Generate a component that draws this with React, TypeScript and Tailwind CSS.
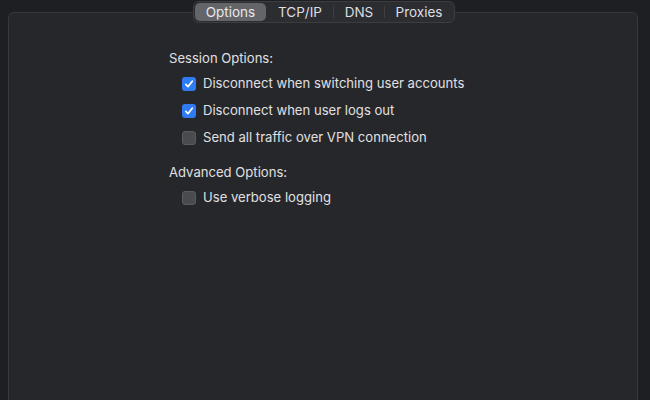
import React, { useState } from "react";

const tabs = [
  { name: "Options", w: "w-[71px]" },
  { name: "TCP/IP", w: "w-[66px]" },
  { name: "DNS", w: "w-[50px]" },
  { name: "Proxies", w: "w-[68px]" },
];

interface CheckRowProps {
  label: string;
  checked: boolean;
  onToggle: () => void;
}

const CheckRow: React.FC<CheckRowProps> = ({ label, checked, onToggle }) => (
  <label className="flex h-[27px] cursor-default items-center gap-[7px] pl-[13px]" onClick={onToggle}>
    {checked ? (
      <span className="flex h-[14px] w-[14px] items-center justify-center rounded-[3px] bg-[#2f7bf5]">
        <svg width="10" height="10" viewBox="0 0 10 10" fill="none">
          <path d="M1.8 5.3 L4 7.6 L8.3 2.2" stroke="white" strokeWidth="1.7" strokeLinecap="round" strokeLinejoin="round" />
        </svg>
      </span>
    ) : (
      <span className="h-[14px] w-[14px] rounded-[3px] border border-[#5a5b5f] bg-[#4a4b4e]" />
    )}
    <span>{label}</span>
  </label>
);

export default function App() {
  const [tab, setTab] = useState("Options");
  const [opts, setOpts] = useState({
    switching: true,
    logout: true,
    vpn: false,
    verbose: false,
  });

  const toggle = (k: keyof typeof opts) => setOpts({ ...opts, [k]: !opts[k] });

  return (
    <div
      className="relative h-[400px] w-[650px] overflow-hidden bg-[#1e1f22] text-[13.1px] text-[#e0e0e2]"
      style={{ fontFamily: "Inter, 'Noto Sans', sans-serif" }}
    >
      <div className="ml-[8px] mr-[12px] mt-[12px] h-[400px] rounded-[6px] border border-[#38393d] bg-[#26272b] pl-[160px] pt-[36px]">
        <div className="flex h-[20px] items-center">Session Options:</div>
        <div className="mt-[1px]">
          <CheckRow label="Disconnect when switching user accounts" checked={opts.switching} onToggle={() => toggle("switching")} />
          <CheckRow label="Disconnect when user logs out" checked={opts.logout} onToggle={() => toggle("logout")} />
          <CheckRow label="Send all traffic over VPN connection" checked={opts.vpn} onToggle={() => toggle("vpn")} />
        </div>
        <div className="mt-[12px] flex h-[20px] items-center">Advanced Options:</div>
        <div className="mt-[1px]">
          <CheckRow label="Use verbose logging" checked={opts.verbose} onToggle={() => toggle("verbose")} />
        </div>
      </div>

      {/* segmented control sits over the panel's top edge */}
      <div className="absolute left-[193px] top-[1px] flex h-[22px] items-center rounded-[6px] border border-[#3c3d41] bg-[#2c2d31] px-[1px] text-[13.5px]">
        {tabs.map((t, i) => {
          const active = tab === t.name;
          const prevActive = i > 0 && tabs[i - 1].name === tab;
          return (
            <div key={t.name} className="flex h-full items-center">
              {i > 0 && (
                <span
                  className={`h-[12px] w-px ${active || prevActive ? "bg-transparent" : "bg-[#3e3f43]"}`}
                />
              )}
              <button
                onClick={() => setTab(t.name)}
                className={`flex h-[18px] items-center justify-center rounded-[5px] ${t.w} ${
                  active ? "bg-[#646569] text-[#e8e8ea]" : "text-[#dedee0]"
                }`}
              >
                {t.name}
              </button>
            </div>
          );
        })}
      </div>
    </div>
  );
}
